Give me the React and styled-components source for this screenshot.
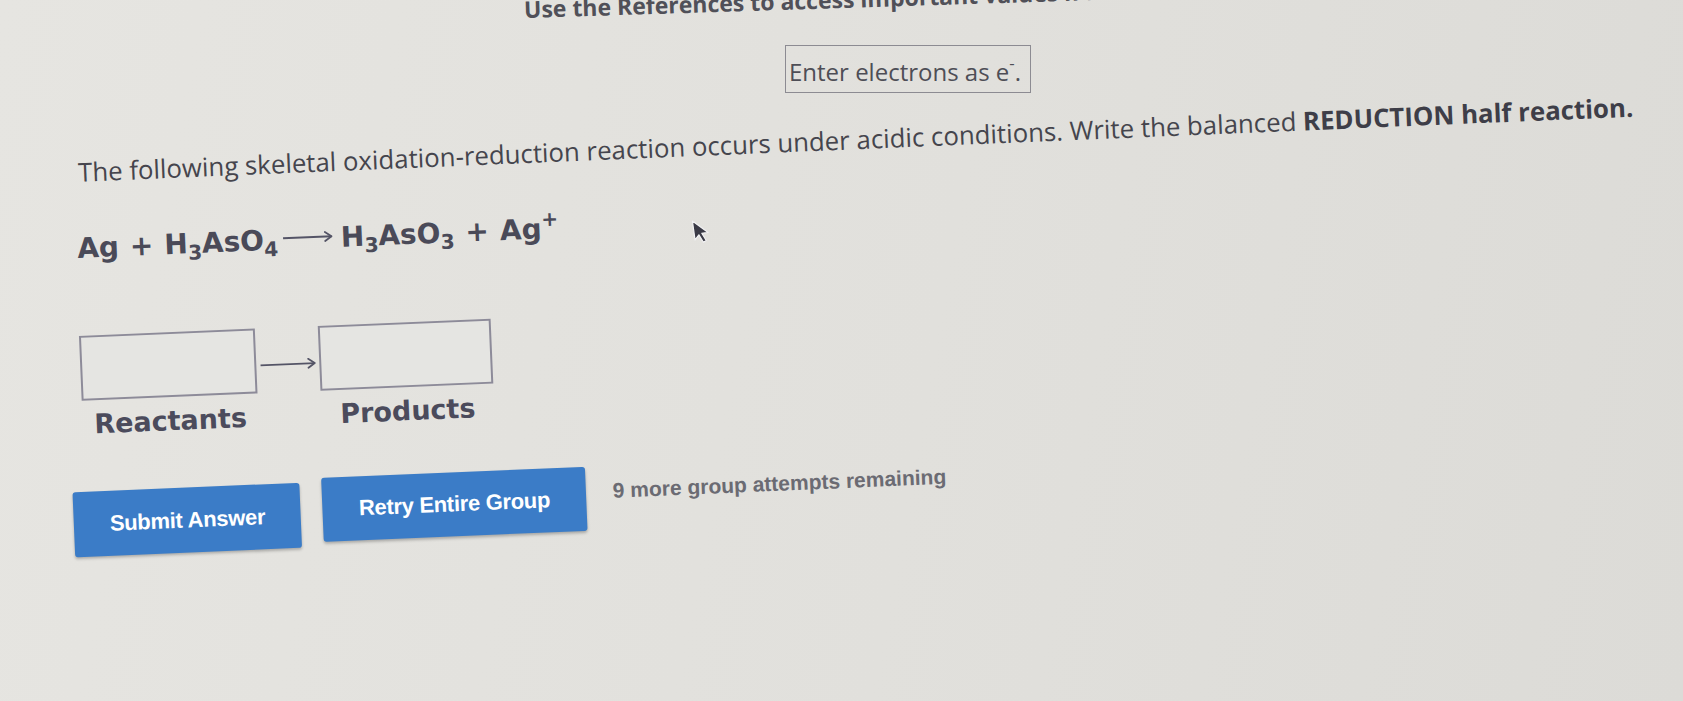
import React from 'react';
import styled, { createGlobalStyle } from 'styled-components';

const GlobalStyle = createGlobalStyle`
  html, body { margin: 0; padding: 0; background: #e1e0dc; }
  body { width: 1683px; height: 701px; overflow: hidden; }
  #root { width: 1683px; height: 701px; }
`;

const Page = styled.div`
  position: relative;
  width: 1683px;
  height: 701px;
  overflow: hidden;
  background: linear-gradient(100deg, #e6e5e1 0%, #e1e0dc 55%, #dcdbd7 100%);
`;

const Header = styled.header`
  height: 100px;
  display: flex;
  flex-direction: column;
  align-items: flex-start;
`;

const TopNote = styled.div`
  margin: -4px 0 0 524px;
  font: 700 23px/26px "Open Sans", sans-serif;
  color: #505058;
  white-space: nowrap;
  transform: rotate(-1.8deg);
  transform-origin: 0 50%;
`;

const Hint = styled.div`
  margin: 23px 0 0 785px;
  box-sizing: border-box;
  height: 48px;
  padding: 6px 9px 0 3px;
  border: 1px solid #8c8b92;
  font: 400 24px/40px "Open Sans", sans-serif;
  color: #4e4e56;
  white-space: nowrap;
`;

const Minus = styled.span`
  font-size: 0.7em;
  vertical-align: 0.7em;
  line-height: 0;
`;

const Body = styled.main`
  width: 1683px;
  padding-top: 58px;
  transform: rotate(-2.4deg);
  transform-origin: 0 0;
`;

const Prompt = styled.p`
  margin: 0 0 0 75px;
  font: 400 25.8px/34px "Open Sans", sans-serif;
  color: #45454d;
  white-space: nowrap;
`;

const Strong = styled.b`
  font-weight: 700;
  color: #3e3e48;
`;

const Equation = styled.div`
  margin: 41px 0 0 71px;
  font: 700 28px/38px "DejaVu Sans", "Verdana", sans-serif;
  color: #4a4a58;
  white-space: nowrap;
`;

const Sub = styled.span`
  font-size: 0.72em;
  vertical-align: -0.32em;
  line-height: 0;
`;

const Sup = styled.span`
  font-size: 0.72em;
  vertical-align: 0.6em;
  line-height: 0;
`;

const Plus = styled.span`
  margin: 0 11px;
`;

const EqArrow = styled.svg`
  display: inline-block;
  vertical-align: 5px;
  margin: 0 8px 0 5px;
`;

const AnswerRow = styled.div`
  display: flex;
  align-items: flex-start;
  margin: 68px 0 0 69px;
`;

const Slot = styled.div`
  display: flex;
  flex-direction: column;
  align-items: center;
`;

const Field = styled.div`
  box-sizing: border-box;
  width: ${(p) => p.$w}px;
  height: 65px;
  border: 2px solid #8d8b99;
  background: #e5e5e2;
`;

const SlotLabel = styled.div`
  margin-top: 8px;
  font: 700 27px/32px "DejaVu Sans", "Verdana", sans-serif;
  color: #4b4b5c;
  white-space: nowrap;
`;

const RowArrow = styled.svg`
  display: block;
  margin: 31px 3px 0 4px;
`;

const Actions = styled.div`
  display: flex;
  align-items: flex-start;
  margin: 47px 0 0 56px;
`;

const Button = styled.button`
  box-sizing: border-box;
  height: ${(p) => p.$h}px;
  margin-top: ${(p) => p.$offset || 0}px;
  margin-right: ${(p) => p.$gap || 0}px;
  padding: 0 36px;
  border: none;
  border-radius: 3px;
  background: #3b7cc7;
  color: #ffffff;
  font: 700 22px/1 "Liberation Sans", Arial, sans-serif;
  letter-spacing: -0.3px;
  white-space: nowrap;
  box-shadow: 0 2px 3px rgba(0, 0, 0, 0.25);
  cursor: pointer;
`;

const Attempts = styled.div`
  padding-top: 13px;
  margin-left: 5px;
  font: 700 21px/24px "Liberation Sans", Arial, sans-serif;
  color: #6b6b73;
  white-space: nowrap;
`;

const Pointer = styled.svg`
  position: absolute;
  left: 692px;
  top: 219px;
  transform: rotate(-8deg);
`;

function LongArrow({ as: Comp, width }) {
  return (
    <Comp width={width} height="12" viewBox={`0 0 ${width} 12`}>
      <line x1="0" y1="6" x2={width - 1.5} y2="6" stroke="#545466" strokeWidth="1.8" />
      <path
        d={`M${width - 8} 1.5 L${width - 1.5} 6 L${width - 8} 10.5`}
        fill="none"
        stroke="#545466"
        strokeWidth="1.8"
        strokeLinecap="round"
        strokeLinejoin="round"
      />
    </Comp>
  );
}

export default function App() {
  return (
    <Page>
      <GlobalStyle />
      <Header>
        <TopNote>Use the References to access important values if needed for this question.</TopNote>
        <Hint>
          Enter electrons as e<Minus>-</Minus>.
        </Hint>
      </Header>
      <Body>
        <Prompt>
          The following skeletal oxidation-reduction reaction occurs under acidic conditions. Write the balanced{' '}
          <Strong>REDUCTION half reaction.</Strong>
        </Prompt>
        <Equation>
          Ag<Plus>+</Plus>H<Sub>3</Sub>AsO<Sub>4</Sub>
          <LongArrow as={EqArrow} width={50} />
          H<Sub>3</Sub>AsO<Sub>3</Sub>
          <Plus>+</Plus>Ag<Sup>+</Sup>
        </Equation>
        <AnswerRow>
          <Slot>
            <Field $w={176} />
            <SlotLabel>Reactants</SlotLabel>
          </Slot>
          <LongArrow as={RowArrow} width={56} />
          <Slot>
            <Field $w={173} />
            <SlotLabel>Products</SlotLabel>
          </Slot>
        </AnswerRow>
        <Actions>
          <Button $h={65} $offset={4} $gap={22}>Submit Answer</Button>
          <Button $h={64} $gap={22}>Retry Entire Group</Button>
          <Attempts>9 more group attempts remaining</Attempts>
        </Actions>
      </Body>
      <Pointer width="18" height="26" viewBox="0 0 18 26">
        <path
          d="M2 1 L2 20 L6.5 15.5 L10 23.5 L13 22.2 L9.6 14.4 L16 14.4 Z"
          fill="#3a3a46"
          stroke="#f2f2f4"
          strokeWidth="1.2"
          strokeLinejoin="round"
        />
      </Pointer>
    </Page>
  );
}
